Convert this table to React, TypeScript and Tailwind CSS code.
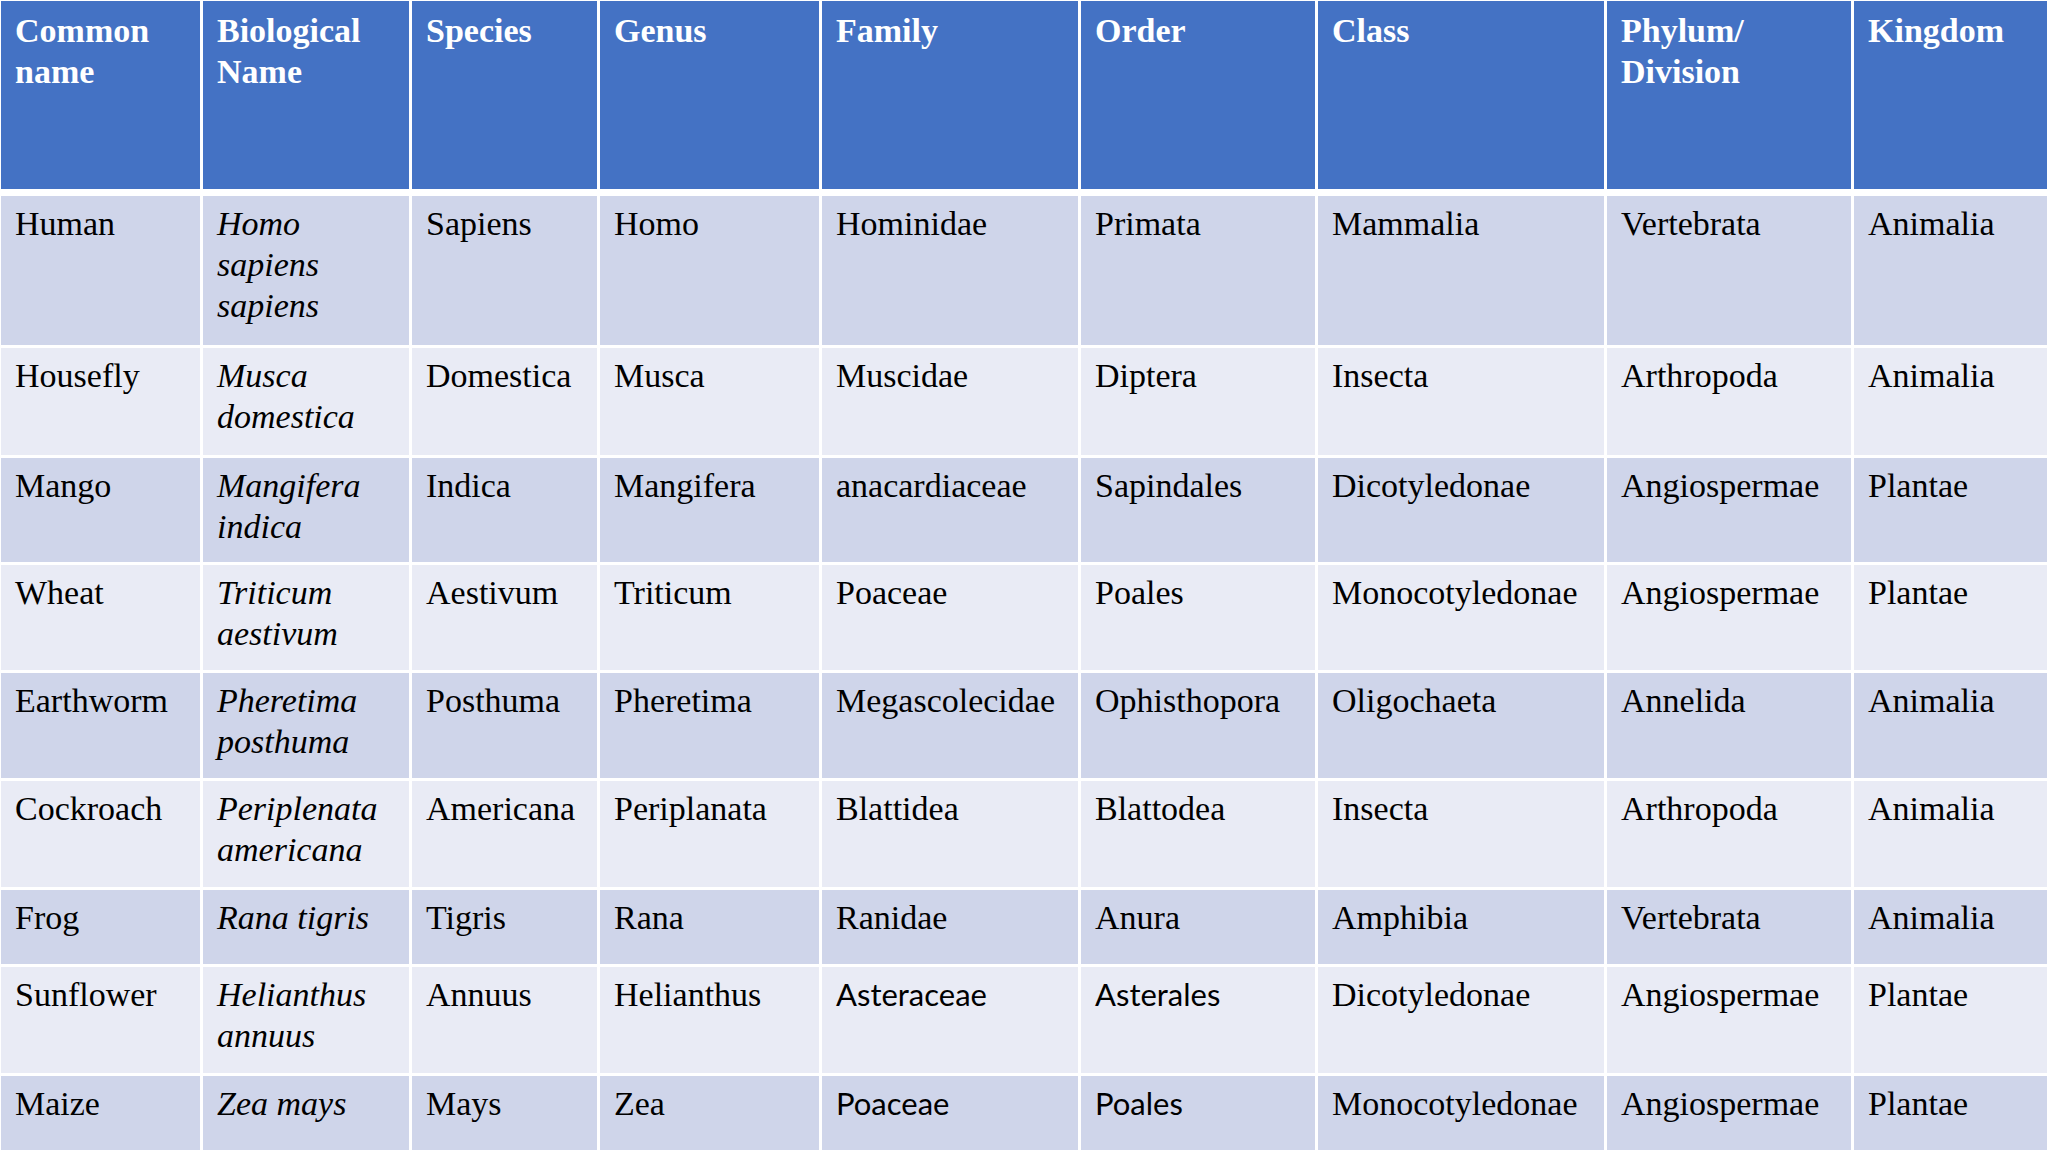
type Cell = { lines: string[]; sans?: boolean };

const HEADERS: string[][] = [
  ['Common', 'name'],
  ['Biological', 'Name'],
  ['Species'],
  ['Genus'],
  ['Family'],
  ['Order'],
  ['Class'],
  ['Phylum/', 'Division'],
  ['Kingdom'],
];

// each row: common, biological (italic), species, genus, family, order, class, phylum, kingdom
const ROWS: { h: string; cells: Cell[] }[] = [
  {
    h: 'h-[149px]',
    cells: [
      { lines: ['Human'] },
      { lines: ['Homo', 'sapiens', 'sapiens'] },
      { lines: ['Sapiens'] },
      { lines: ['Homo'] },
      { lines: ['Hominidae'] },
      { lines: ['Primata'] },
      { lines: ['Mammalia'] },
      { lines: ['Vertebrata'] },
      { lines: ['Animalia'] },
    ],
  },
  {
    h: 'h-[107px]',
    cells: [
      { lines: ['Housefly'] },
      { lines: ['Musca', 'domestica'] },
      { lines: ['Domestica'] },
      { lines: ['Musca'] },
      { lines: ['Muscidae'] },
      { lines: ['Diptera'] },
      { lines: ['Insecta'] },
      { lines: ['Arthropoda'] },
      { lines: ['Animalia'] },
    ],
  },
  {
    h: 'h-[104px]',
    cells: [
      { lines: ['Mango'] },
      { lines: ['Mangifera', 'indica'] },
      { lines: ['Indica'] },
      { lines: ['Mangifera'] },
      { lines: ['anacardiaceae'] },
      { lines: ['Sapindales'] },
      { lines: ['Dicotyledonae'] },
      { lines: ['Angiospermae'] },
      { lines: ['Plantae'] },
    ],
  },
  {
    h: 'h-[105px]',
    cells: [
      { lines: ['Wheat'] },
      { lines: ['Triticum', 'aestivum'] },
      { lines: ['Aestivum'] },
      { lines: ['Triticum'] },
      { lines: ['Poaceae'] },
      { lines: ['Poales'] },
      { lines: ['Monocotyledonae'] },
      { lines: ['Angiospermae'] },
      { lines: ['Plantae'] },
    ],
  },
  {
    h: 'h-[105px]',
    cells: [
      { lines: ['Earthworm'] },
      { lines: ['Pheretima', 'posthuma'] },
      { lines: ['Posthuma'] },
      { lines: ['Pheretima'] },
      { lines: ['Megascolecidae'] },
      { lines: ['Ophisthopora'] },
      { lines: ['Oligochaeta'] },
      { lines: ['Annelida'] },
      { lines: ['Animalia'] },
    ],
  },
  {
    h: 'h-[106px]',
    cells: [
      { lines: ['Cockroach'] },
      { lines: ['Periplenata', 'americana'] },
      { lines: ['Americana'] },
      { lines: ['Periplanata'] },
      { lines: ['Blattidea'] },
      { lines: ['Blattodea'] },
      { lines: ['Insecta'] },
      { lines: ['Arthropoda'] },
      { lines: ['Animalia'] },
    ],
  },
  {
    h: 'h-[74px]',
    cells: [
      { lines: ['Frog'] },
      { lines: ['Rana tigris'] },
      { lines: ['Tigris'] },
      { lines: ['Rana'] },
      { lines: ['Ranidae'] },
      { lines: ['Anura'] },
      { lines: ['Amphibia'] },
      { lines: ['Vertebrata'] },
      { lines: ['Animalia'] },
    ],
  },
  {
    h: 'h-[106px]',
    cells: [
      { lines: ['Sunflower'] },
      { lines: ['Helianthus', 'annuus'] },
      { lines: ['Annuus'] },
      { lines: ['Helianthus'] },
      { lines: ['Asteraceae'], sans: true },
      { lines: ['Asterales'], sans: true },
      { lines: ['Dicotyledonae'] },
      { lines: ['Angiospermae'] },
      { lines: ['Plantae'] },
    ],
  },
  {
    h: 'h-[74px]',
    cells: [
      { lines: ['Maize'] },
      { lines: ['Zea mays'] },
      { lines: ['Mays'] },
      { lines: ['Zea'] },
      { lines: ['Poaceae'], sans: true },
      { lines: ['Poales'], sans: true },
      { lines: ['Monocotyledonae'] },
      { lines: ['Angiospermae'] },
      { lines: ['Plantae'] },
    ],
  },
];

const COLS = 'grid grid-cols-[199px_206px_185px_219px_256px_234px_286px_244px_193px] gap-x-[3px]';

export default function App() {
  return (
    <div className="w-[2048px] h-[1152px] overflow-hidden bg-white pl-[1px] pt-[1px] font-['Liberation_Serif',serif]">
      <div className={`${COLS} h-[188px]`}>
        {HEADERS.map((lines, i) => (
          <div key={i} className="bg-[#4472c4] pl-[14px] pt-[9px] text-[34px] leading-[41px] font-bold text-white whitespace-nowrap">
            {lines.map((l) => (
              <div key={l}>{l}</div>
            ))}
          </div>
        ))}
      </div>

      <div className="mt-[7px] flex flex-col gap-y-[3px]">
        {ROWS.map((row, r) => (
          <div key={r} className={`${COLS} ${row.h}`}>
            {row.cells.map((cell, c) => (
              <div
                key={c}
                className={`${r % 2 === 0 ? 'bg-[#cfd5ea]' : 'bg-[#e9ebf5]'} pl-[14px] pt-[7px] text-black whitespace-nowrap ${
                  cell.sans
                    ? "font-['Lato',sans-serif] text-[31px] leading-[41px]"
                    : 'text-[34px] leading-[41px]'
                } ${c === 1 ? 'italic' : ''}`}
              >
                {cell.lines.map((l) => (
                  <div key={l}>{l}</div>
                ))}
              </div>
            ))}
          </div>
        ))}
      </div>
    </div>
  );
}
